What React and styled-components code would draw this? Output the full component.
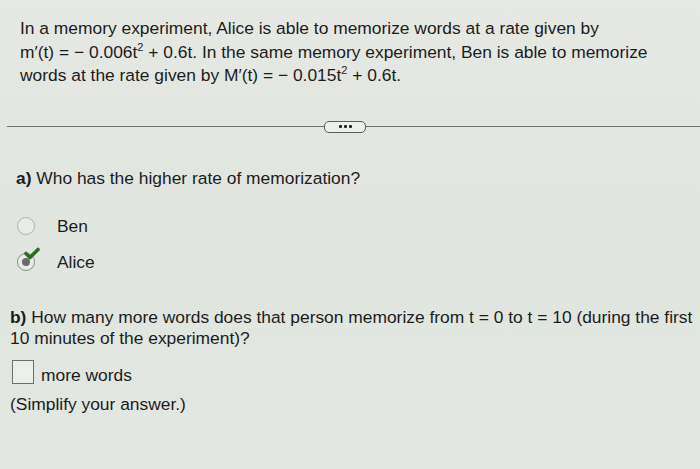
import React from "react";
import styled, { createGlobalStyle } from "styled-components";

const GlobalStyle = createGlobalStyle`
  html, body {
    margin: 0;
    padding: 0;
    background: #e3e7e1;
  }
  body {
    font-family: "Liberation Sans", Arial, sans-serif;
    color: #1c1c1c;
  }
`;

const Page = styled.div`
  width: 700px;
  height: 469px;
  overflow: hidden;
  background: linear-gradient(180deg, #e6e9e3 0%, #e1e5df 50%, #e3e7e2 100%);
`;

const Intro = styled.p`
  margin: 0;
  padding: 17px 0 0 20px;
  font-size: 17.4px;
  line-height: 23.5px;
  white-space: nowrap;
`;

const Sup = styled.sup`
  font-size: 11px;
  line-height: 0;
  vertical-align: 7px;
`;

const Divider = styled.div`
  display: flex;
  align-items: center;
  margin: 33px 0 0 7px;
  height: 12px;
`;

const Rule = styled.div`
  flex: ${(p) => p.$grow};
  height: 1px;
  background: #6d716c;
`;

const MoreButton = styled.div`
  width: 40px;
  height: 10px;
  border: 1px solid #5a5e59;
  border-radius: 5px;
  display: flex;
  align-items: center;
  justify-content: center;
  gap: 2px;
  background: #eef0ec;
`;

const Dot = styled.span`
  width: 3px;
  height: 3px;
  border-radius: 1px;
  background: #222;
`;

const Question = styled.p`
  margin: ${(p) => p.$margin};
  padding-left: ${(p) => p.$indent}px;
  font-size: 17.4px;
  line-height: 21px;
  white-space: nowrap;
`;

const Label = styled.b`
  font-weight: bold;
`;

const Options = styled.div`
  display: flex;
  flex-direction: column;
  gap: 17px;
  margin: 28px 0 0 17px;
`;

const Option = styled.label`
  display: flex;
  align-items: center;
  gap: 22px;
  font-size: 17.4px;
  line-height: 19px;
`;

const Radio = styled.span`
  position: relative;
  width: 18px;
  height: 18px;
  border-radius: 50%;
  border: 1.5px solid ${(p) => (p.$checked ? "#8d908c" : "#b0b4af")};
  background: #e9ece7;
  box-sizing: border-box;
  flex-shrink: 0;
  display: flex;
  align-items: center;
  justify-content: center;
`;

const InnerDot = styled.span`
  width: 8px;
  height: 8px;
  border-radius: 50%;
  background: #6a6d69;
`;

const Check = styled.svg`
  position: absolute;
  left: 6px;
  top: -7px;
`;

const AnswerRow = styled.div`
  display: flex;
  align-items: center;
  gap: 7px;
  margin: 9px 0 0 12px;
  font-size: 17.4px;
`;

const AnswerBox = styled.span`
  width: 22px;
  height: 24px;
  border: 1px solid #6e6e6e;
  box-sizing: border-box;
  background: #eceeea;
`;

const AnswerText = styled.span`
  padding-top: 7px;
`;

const Hint = styled.p`
  margin: 8px 0 0 10px;
  font-size: 17.4px;
  line-height: 20px;
`;

export default function App() {
  return (
    <Page>
      <GlobalStyle />
      <Intro>
        In a memory experiment, Alice is able to memorize words at a rate given by
        <br />
        m′(t) = − 0.006t<Sup>2</Sup> + 0.6t. In the same memory experiment, Ben is able to memorize
        <br />
        words at the rate given by M′(t) = − 0.015t<Sup>2</Sup> + 0.6t.
      </Intro>

      <Divider>
        <Rule $grow={317} />
        <MoreButton>
          <Dot />
          <Dot />
          <Dot />
        </MoreButton>
        <Rule $grow={334} />
      </Divider>

      <Question $margin="35px 0 0 0" $indent={16}>
        <Label>a)</Label> Who has the higher rate of memorization?
      </Question>

      <Options>
        <Option>
          <Radio />
          Ben
        </Option>
        <Option>
          <Radio $checked>
            <InnerDot />
            <Check width="16" height="13" viewBox="0 0 16 13">
              <path d="M2 6.5 L6 10.5 L14 2.5" fill="none" stroke="#2c6e1c" strokeWidth="3.6" strokeLinecap="round" strokeLinejoin="round" />
            </Check>
          </Radio>
          Alice
        </Option>
      </Options>

      <Question $margin="35px 0 0 0" $indent={10}>
        <Label>b)</Label> How many more words does that person memorize from t = 0 to t = 10 (during the first
        <br />
        10 minutes of the experiment)?
      </Question>

      <AnswerRow>
        <AnswerBox />
        <AnswerText>more words</AnswerText>
      </AnswerRow>
      <Hint>(Simplify your answer.)</Hint>
    </Page>
  );
}
